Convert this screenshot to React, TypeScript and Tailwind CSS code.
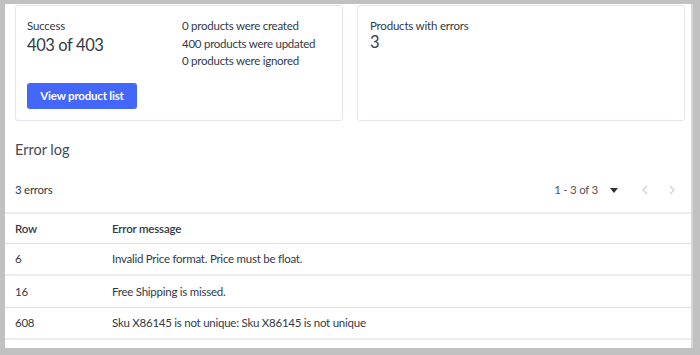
import React from "react";

const rows = [
  { row: "6", msg: "Invalid Price format. Price must be float." },
  { row: "16", msg: "Free Shipping is missed." },
  { row: "608", msg: "Sku X86145 is not unique: Sku X86145 is not unique" },
];

export default function App() {
  return (
    <div className="w-[700px] h-[355px] bg-[#c1c1c1] pl-[5px] pt-[4px] overflow-hidden font-['Lato',sans-serif] text-[#333a45]">
      <div className="w-[688px] h-[344px] bg-white border-r-2 border-[#d6d6d6] flex flex-col">
        <div className="flex gap-[14px] pl-[10px] pr-[5px] pt-px">
          <div className="w-[328px] h-[116px] border border-[#e4e4ec] rounded-[3px] pl-[11px] pt-[12px] flex flex-col">
            <div className="flex">
              <div className="w-[155px]">
                <div className="text-[11.5px] leading-[16px] tracking-[-0.2px]">Success</div>
                <div className="text-[16.5px] leading-[22px] tracking-[-0.4px]">403 of 403</div>
              </div>
              <div className="text-[11.5px] leading-[17.5px] tracking-[-0.25px] mt-[-1px]">
                <div>0 products were created</div>
                <div>400 products were updated</div>
                <div>0 products were ignored</div>
              </div>
            </div>
            <button className="mt-[13px] w-[110px] h-[26px] rounded-[3px] bg-[#4366fb] text-white text-[11.5px] tracking-[-0.2px] font-bold">
              View product list
            </button>
          </div>
          <div className="w-[328px] h-[116px] border border-[#e4e4ec] rounded-[3px] pl-[12px] pt-[12px]">
            <div className="text-[11.5px] leading-[16px] tracking-[-0.2px]">Products with errors</div>
            <div className="text-[16.5px] leading-[22px] mt-[-3px]">3</div>
          </div>
        </div>
        <div className="pl-[10px] mt-[19px] text-[14.5px] leading-[20px] text-[#454b55]">Error log</div>
        <div className="flex items-center h-[20px] mt-[20px] pl-[10px] text-[11.5px] tracking-[-0.25px]">
          <div className="flex-1">3 errors</div>
          <div className="flex items-center">
            <span className="text-[#555]">1 - 3 of 3</span>
            <svg className="ml-[12px]" width="8" height="5" viewBox="0 0 8 5"><path d="M0 0 L8 0 L4 5 Z" fill="#333" /></svg>
            <svg className="ml-[24px]" width="6" height="10" viewBox="0 0 6 10"><path d="M5 1 L1 5 L5 9" stroke="#d0d0d6" strokeWidth="1.2" fill="none" /></svg>
            <svg className="ml-[21px] mr-[16px]" width="6" height="10" viewBox="0 0 6 10"><path d="M1 1 L5 5 L1 9" stroke="#d0d0d6" strokeWidth="1.2" fill="none" /></svg>
          </div>
        </div>
        <div className="mt-[12px] border-t-2 border-[#ececf3]">
          <div className="flex items-center h-[30px] text-[11.5px] tracking-[-0.2px] font-semibold border-b border-[#e2e2e2]">
            <div className="w-[107px] pl-[10px]">Row</div>
            <div>Error message</div>
          </div>
          {rows.map((r, i) => (
            <div key={r.row} className={`flex items-center h-[32px] text-[11.5px] tracking-[-0.25px] ${i % 2 === 0 ? "border-b-2 border-[#ececf3]" : "border-b border-[#e2e2e2]"}`}>
              <div className="w-[107px] pl-[10px]">{r.row}</div>
              <div>{r.msg}</div>
            </div>
          ))}
        </div>
      </div>
    </div>
  );
}
